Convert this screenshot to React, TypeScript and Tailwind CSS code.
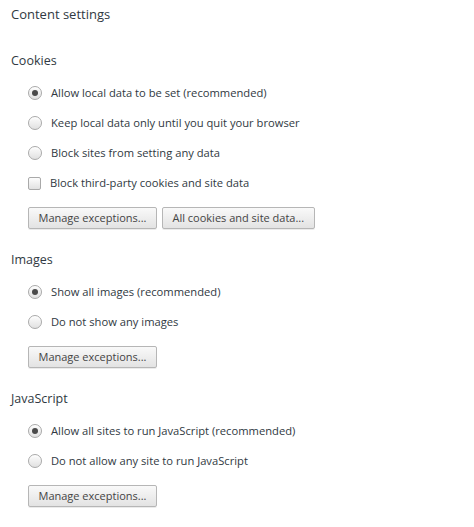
import React from 'react';

type Option = { label: string; checked?: boolean; kind?: 'radio' | 'checkbox' };

type Section = {
  title: string;
  options: Option[];
  buttons: string[];
};

const SECTIONS: Section[] = [
  {
    title: 'Cookies',
    options: [
      { label: 'Allow local data to be set (recommended)', checked: true },
      { label: 'Keep local data only until you quit your browser' },
      { label: 'Block sites from setting any data' },
      { label: 'Block third-party cookies and site data', kind: 'checkbox' },
    ],
    buttons: ['Manage exceptions...', 'All cookies and site data...'],
  },
  {
    title: 'Images',
    options: [
      { label: 'Show all images (recommended)', checked: true },
      { label: 'Do not show any images' },
    ],
    buttons: ['Manage exceptions...'],
  },
  {
    title: 'JavaScript',
    options: [
      { label: 'Allow all sites to run JavaScript (recommended)', checked: true },
      { label: 'Do not allow any site to run JavaScript' },
    ],
    buttons: ['Manage exceptions...'],
  },
];

function Radio({ checked }: { checked?: boolean }) {
  return (
    <span className="flex h-[14px] w-[14px] shrink-0 items-center justify-center rounded-full border border-[#a9a9a9] bg-gradient-to-b from-[#fdfdfd] to-[#e1e1e1] shadow-[inset_0_1px_1px_rgba(255,255,255,0.9)]">
      {checked && <span className="h-[6px] w-[6px] rounded-full bg-[#4a4a4a]" />}
    </span>
  );
}

function Checkbox() {
  return (
    <span className="h-[13px] w-[13px] shrink-0 rounded-[2px] border border-[#a9a9a9] bg-gradient-to-b from-[#fdfdfd] to-[#e1e1e1]" />
  );
}

function SettingsButton({ label }: { label: string }) {
  return (
    <button className="h-[22px] rounded-[2px] border border-[#b6b6b6] bg-gradient-to-b from-[#f9f9f9] to-[#e3e3e3] px-[9.5px] text-[11px] leading-[20px] text-[#444] shadow-[0_1px_0_rgba(0,0,0,0.08)]">
      {label}
    </button>
  );
}

export default function App() {
  return (
    <div
      className="min-h-[527px] w-[474px] bg-white pl-[11px] pt-[4px] text-[#303942]"
      style={{ fontFamily: '"Open Sans", "Liberation Sans", sans-serif' }}
    >
      <h1 className="h-[20px] text-[13px] leading-[20px]">Content settings</h1>

      <div className="mt-[27px] flex flex-col gap-[21px]">
        {SECTIONS.map((section) => (
          <section key={section.title}>
            {/* Section heading */}
            <h2 className="h-[20px] text-[12.5px] leading-[20px]">{section.title}</h2>

            <div className="mt-[7px] pl-[17px]">
              {section.options.map((opt) => (
                <label key={opt.label} className="flex h-[30px] items-center">
                  {opt.kind === 'checkbox' ? <Checkbox /> : <Radio checked={opt.checked} />}
                  <span className="ml-[9px] text-[11.2px]">{opt.label}</span>
                </label>
              ))}

              <div className="mt-[9px] flex gap-[5px]">
                {section.buttons.map((b) => (
                  <SettingsButton key={b} label={b} />
                ))}
              </div>
            </div>
          </section>
        ))}
      </div>
    </div>
  );
}
